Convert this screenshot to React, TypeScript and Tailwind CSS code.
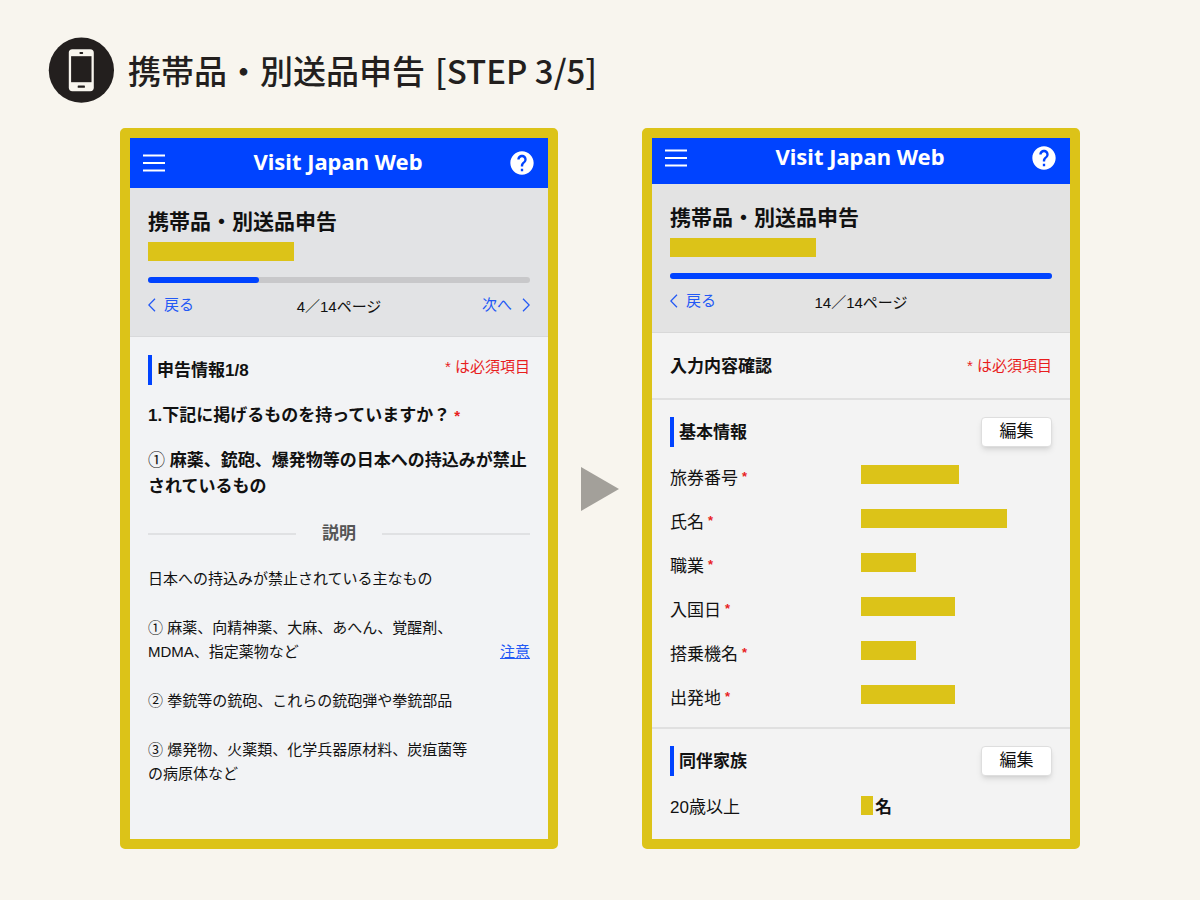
import React from 'react';
import { MdHelp } from 'react-icons/md';

interface Field {
    label: string;
    mask: string;
}

const fields: Field[] = [
    { label: '旅券番号', mask: 'w-[98px]' },
    { label: '氏名', mask: 'w-[146px]' },
    { label: '職業', mask: 'w-[55px]' },
    { label: '入国日', mask: 'w-[94px]' },
    { label: '搭乗機名', mask: 'w-[55px]' },
    { label: '出発地', mask: 'w-[94px]' },
];

const PhoneIcon: React.FC = () => (
    <svg viewBox="0 0 66 66" className="size-[66px] shrink-0" aria-hidden="true">
        <circle cx="33.4" cy="33.2" r="32.6" fill="#231f1e" />
        <rect x="20.8" y="12.2" width="25" height="42" rx="3.6" fill="#f8f5ee" />
        <rect x="23.1" y="19.2" width="20.4" height="26" fill="#231f1e" />
        <rect x="31.5" y="14.9" width="3.6" height="2" rx="0.6" fill="#231f1e" />
        <rect x="29.7" y="48.4" width="7.2" height="2.4" rx="0.6" fill="#231f1e" />
    </svg>
);

const Chevron: React.FC<{ next?: boolean }> = ({ next }) => (
    <svg viewBox="0 0 8 14" className="h-3.5 w-2" fill="none" stroke="currentColor" strokeWidth="1.3" aria-hidden="true">
        <path d={next ? 'M1 .8 7.2 7 1 13.2' : 'M7 .8.8 7 7 13.2'} />
    </svg>
);

const AppBar: React.FC<{ className: string }> = ({ className }) => (
    <div className={`bg-[#0043ff] text-white ${className}`}>
        <div className="flex h-full items-center justify-between pr-3 pl-2.5">
            <button type="button" aria-label="メニュー" className="flex size-7 items-center justify-center">
                <svg viewBox="0 0 22 18" className="h-[18px] w-[22px]" stroke="currentColor" strokeWidth="2" aria-hidden="true">
                    <path d="M0 1.4h22M0 9h22M0 16.6h22" />
                </svg>
            </button>
            <span className="pb-1 font-['Noto_Sans',sans-serif] text-[22px] leading-7 font-bold">Visit Japan Web</span>
            <button type="button" aria-label="ヘルプ" className="flex size-7 items-center justify-center">
                <MdHelp className="size-7" />
            </button>
        </div>
    </div>
);

interface ProgressProps {
    page: number;
    percent: number;
    className: string;
}

const Progress: React.FC<ProgressProps> = ({ page, percent, className }) => (
    <div className={`border-b px-[18px] pt-[18px] pb-[17px] ${className}`}>
        <h2 className="text-[21px] leading-8 font-bold">携帯品・別送品申告</h2>
        <div className="mt-1 h-[19px] w-[146px] bg-[#dcc318]" />
        <div className="mt-4 h-1.5 rounded-full bg-[#c8c8ca]">
            <div className="h-full rounded-full bg-[#0043ff]" style={{ width: `${percent}%` }} />
        </div>
        <div className="mt-2.5 grid grid-cols-3 items-start text-[15px] leading-6">
            <a href="#back" className="flex items-center gap-2 text-[#2359f5]">
                <Chevron />
                戻る
            </a>
            <span className="pt-0.5 text-center whitespace-nowrap">{page}／14ページ</span>
            {page < 14 && (
                <a href="#next" className="flex items-center justify-end gap-2.5 text-[#2359f5]">
                    次へ
                    <Chevron next />
                </a>
            )}
        </div>
    </div>
);

const Required: React.FC = () => <span className="text-[15px] leading-6 text-[#e81e1e]">* は必須項目</span>;

const BarHeading: React.FC<{ children: React.ReactNode }> = ({ children }) => (
    <h3 className="h-[30px] border-l-4 border-[#0043ff] pl-[5px] text-[17px] leading-8 font-bold">{children}</h3>
);

const EditButton: React.FC = () => (
    <button type="button" className="h-[30px] w-[71px] rounded border border-[#dedede] bg-white text-[17px] leading-7 shadow-md">
        編集
    </button>
);

const DeclarationScreen: React.FC = () => (
    <section className="rounded-[5px] border-[10px] border-[#dcc318] bg-[#f2f3f5]">
        <AppBar className="h-[50px]" />
        <Progress page={4} percent={29} className="border-[#d8d9db] bg-[#e2e3e5]" />
        <div className="px-[18px] pt-[18px] pb-12">
            <div className="flex justify-between">
                <BarHeading>申告情報1/8</BarHeading>
                <Required />
            </div>
            <p className="mt-[18px] text-[17px] leading-[26px] font-bold">
                1.下記に掲げるものを持っていますか？
                <span className="ml-1 text-[15px] leading-4 text-[#e81e1e]">*</span>
            </p>
            <p className="mt-[19px] text-[17px] leading-[26px] font-bold">
                <span className="font-normal">①</span> 麻薬、銃砲、爆発物等の日本への持込みが禁止
                <br />
                されているもの
            </p>
            <div className="mt-[21px] flex items-center gap-[26px]">
                <div className="h-0.5 flex-1 bg-[#e0e1e3]" />
                <span className="text-[17px] leading-[26px] font-bold text-[#555555]">説明</span>
                <div className="h-0.5 flex-1 bg-[#e0e1e3]" />
            </div>
            <div className="mt-5 space-y-[25px] text-[15px] leading-6">
                <p>日本への持込みが禁止されている主なもの</p>
                <div className="flex items-end justify-between">
                    <p className="max-w-[330px]">① 麻薬、向精神薬、大麻、あへん、覚醒剤、MDMA、指定薬物など</p>
                    <a href="#note" className="shrink-0 text-[#2359f5] underline">注意</a>
                </div>
                <p className="max-w-[330px]">② 拳銃等の銃砲、これらの銃砲弾や拳銃部品</p>
                <p className="max-w-[330px]">③ 爆発物、火薬類、化学兵器原材料、炭疽菌等の病原体など</p>
            </div>
        </div>
    </section>
);

const ConfirmScreen: React.FC = () => (
    <section className="rounded-[5px] border-[10px] border-[#dcc318] bg-[#f3f3f3]">
        <AppBar className="h-[46px] pb-1.5" />
        <Progress page={14} percent={100} className="border-[#d8d8d8] bg-[#e3e3e3]" />
        <div className="flex h-[67px] items-center justify-between border-b-2 border-[#e0e0e0] px-[18px]">
            <h3 className="pt-0.5 text-[17px] leading-6 font-bold">入力内容確認</h3>
            <Required />
        </div>
        <div className="border-b-2 border-[#e0e0e0] px-[18px] pt-[17px] pb-1.5">
            <div className="flex justify-between">
                <BarHeading>基本情報</BarHeading>
                <EditButton />
            </div>
            <dl className="mt-2.5">
                {fields.map((field) => (
                    <div key={field.label} className="grid h-11 grid-cols-2 items-center text-[17px] leading-6">
                        <dt>
                            {field.label}
                            <span className="ml-1 align-top text-[13px] leading-5 font-bold text-[#e81e1e]">*</span>
                        </dt>
                        <dd className={`mb-2.5 h-[19px] bg-[#dcc318] ${field.mask}`} />
                    </div>
                ))}
            </dl>
        </div>
        <div className="px-[18px] pt-[17px] pb-[9px]">
            <div className="flex justify-between">
                <BarHeading>同伴家族</BarHeading>
                <EditButton />
            </div>
            <dl className="mt-2.5 grid h-11 grid-cols-2 items-center text-[17px] leading-6">
                <dt>20歳以上</dt>
                <dd className="flex items-start gap-0.5 font-bold">
                    <span className="h-[19px] w-3 bg-[#dcc318]" />
                    名
                </dd>
            </dl>
        </div>
    </section>
);

const App: React.FC = () => {
    return (
        <div
            lang="ja"
            className="min-h-screen bg-[#f8f5ee] pt-[37px] pb-[51px] font-['Liberation_Sans','Noto_Sans_CJK_JP',sans-serif] text-[#111111]"
        >
            <header className="flex items-center gap-3.5 px-12">
                <PhoneIcon />
                <h1 className="flex gap-2.5 font-['Noto_Sans_CJK_JP',sans-serif] text-[33px] leading-[46px] font-medium text-[#231f1e]">
                    <span>携帯品・別送品申告</span>
                    <span>[STEP 3/5]</span>
                </h1>
            </header>
            <main className="mt-[25px] grid grid-cols-[1fr_84px_1fr] px-[120px]">
                <DeclarationScreen />
                <svg viewBox="0 0 38 44" className="h-11 w-[38px] place-self-center" aria-hidden="true">
                    <path d="M0 0 38 22 0 44Z" fill="#a3a09a" />
                </svg>
                <ConfirmScreen />
            </main>
        </div>
    );
};

export default App;
